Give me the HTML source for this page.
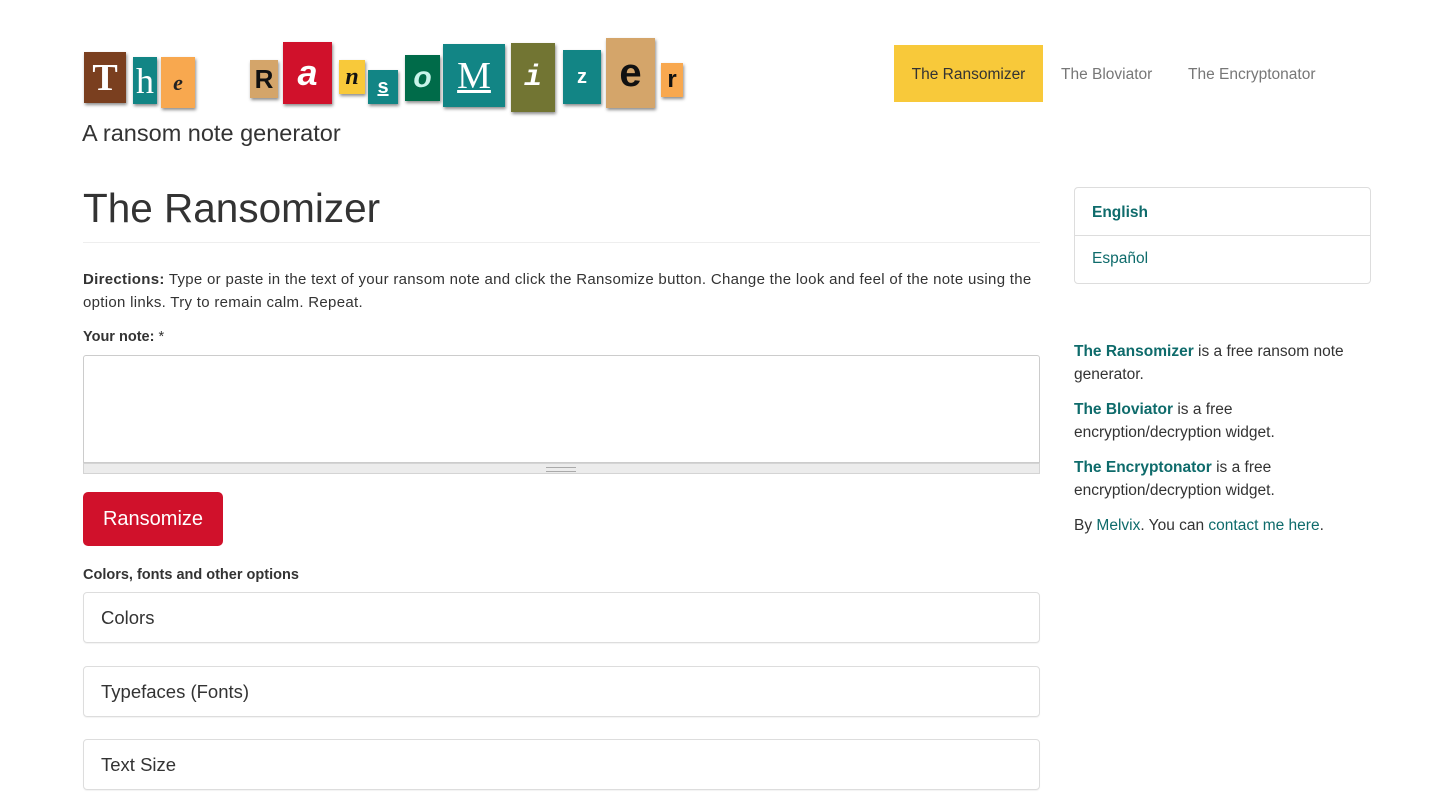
<!DOCTYPE html>
<html><head><meta charset="utf-8"><style>
body{margin:0;background:#fff;font-family:"Liberation Sans",sans-serif;color:#333;width:1444px;height:796px;overflow:hidden;position:relative}
.a{position:absolute}
.t{position:absolute;box-shadow:1px 2px 3px rgba(0,0,0,.45);display:flex;align-items:center;justify-content:center;font-weight:bold}
a{color:#0e6b6b;text-decoration:none}
.nav{position:absolute;top:45px;height:57px;line-height:60px;font-size:15.5px;color:#777}
.panel{position:absolute;left:83px;width:957px;border:1px solid #ddd;border-radius:4px;font-size:18.5px;color:#333;padding-left:17px;box-sizing:border-box;box-shadow:0 1px 1px rgba(0,0,0,.05)}
.sb{font-size:15.5px;line-height:23px;color:#333}
.sb b{color:#0e6b6b}
</style></head><body>
<div class="t" style="left:84px;top:52px;width:42px;height:51px;background:#7a3f1f;color:#fff;font:bold 38px 'Liberation Serif',serif">T</div>
<div class="t" style="left:133px;top:57px;width:24px;height:47px;background:#128585;color:#fff;font:36px 'Liberation Serif',serif">h</div>
<div class="t" style="left:161px;top:57px;width:34px;height:51px;background:#f8a84f;color:#222;font:italic bold 22px 'Liberation Serif',serif">e</div>
<div class="t" style="left:250px;top:60px;width:28px;height:38px;background:#d4a56a;color:#111;font:bold 26px 'Liberation Sans',sans-serif">R</div>
<div class="t" style="left:283px;top:42px;width:49px;height:62px;background:#d0112b;color:#fff;font:italic bold 36px 'Liberation Sans',sans-serif">a</div>
<div class="t" style="left:339px;top:60px;width:26px;height:34px;background:#f8c93a;color:#111;font:italic bold 24px 'Liberation Serif',serif">n</div>
<div class="t" style="left:368px;top:70px;width:30px;height:34px;background:#128585;color:#fff;font:bold 20px 'Liberation Sans',sans-serif;text-decoration:underline">s</div>
<div class="t" style="left:405px;top:55px;width:35px;height:46px;background:#006b49;color:#c8f4ea;font:italic bold 30px 'Liberation Sans',sans-serif">o</div>
<div class="t" style="left:443px;top:44px;width:62px;height:63px;background:#128585;color:#fff;font:38px 'Liberation Serif',serif;text-decoration:underline">M</div>
<div class="t" style="left:511px;top:43px;width:44px;height:69px;background:#727533;color:#fff;font:italic bold 30px 'Liberation Mono',monospace">i</div>
<div class="t" style="left:563px;top:50px;width:38px;height:54px;background:#128585;color:#fff;font:bold 20px 'Liberation Sans',sans-serif">z</div>
<div class="t" style="left:606px;top:38px;width:49px;height:70px;background:#d4a56a;color:#111;font:bold 40px 'Liberation Sans',sans-serif">e</div>
<div class="t" style="left:661px;top:63px;width:22px;height:34px;background:#f8a84f;color:#111;font:bold 24px 'Liberation Sans',sans-serif">r</div>
<div class="a" style="left:82px;top:120px;font-size:23.5px;color:#333">A ransom note generator</div>

<div class="nav" style="left:894px;width:149px;background:#f8c93a;color:#333;text-align:center">The Ransomizer</div>
<div class="nav" style="left:1061px">The Bloviator</div>
<div class="nav" style="left:1188px">The Encryptonator</div>

<div class="a" style="left:83px;top:185px;font-size:40.5px;color:#333">The Ransomizer</div>
<div class="a" style="left:83px;top:242px;width:957px;border-top:1px solid #eee"></div>
<div class="a" style="left:83px;top:268px;width:962px;font-size:15px;line-height:23px;letter-spacing:.3px">
<b>Directions:</b> Type or paste in the text of your ransom note and click the Ransomize button. Change the look and feel of the note using the option links. Try to remain calm. Repeat.</div>
<div class="a" style="left:83px;top:329px;font-size:14.5px;font-weight:bold">Your note: <span style="font-weight:normal">*</span></div>
<div class="a" style="left:83px;top:355px;width:957px;height:108px;border:1px solid #ccc;border-radius:3px 3px 0 0;box-sizing:border-box"></div>
<div class="a" style="left:83px;top:463px;width:957px;height:11px;background:#ececec;border:1px solid #d4d4d4;box-sizing:border-box"></div>
<div class="a" style="left:546px;top:467px;width:30px;height:3px;border-top:1px solid #aaa;border-bottom:1px solid #aaa"></div>
<div class="a" style="left:83px;top:492px;width:140px;height:54px;background:#d0112b;border-radius:5px;color:#fff;font-size:20px;line-height:54px;text-align:center">Ransomize</div>
<div class="a" style="left:83px;top:567px;font-size:14.5px;font-weight:bold">Colors, fonts and other options</div>
<div class="panel" style="top:592px;height:51px;line-height:49px">Colors</div>
<div class="panel" style="top:666px;height:51px;line-height:49px">Typefaces (Fonts)</div>
<div class="panel" style="top:739px;height:51px;line-height:49px">Text Size</div>

<div class="a" style="left:1074px;top:187px;width:297px;height:97px;border:1px solid #ddd;border-radius:4px;box-sizing:border-box;font-size:15.5px">
<div style="height:47px;line-height:49px;padding-left:17px;border-bottom:1px solid #ddd;font-weight:bold;color:#0e6b6b">English</div>
<div style="line-height:46px;padding-left:17px;color:#0e6b6b">Español</div></div>
<div class="a sb" style="left:1074px;top:340px;width:290px">
<div style="margin-bottom:12px"><b>The Ransomizer</b> is a free ransom note generator.</div>
<div style="margin-bottom:12px"><b>The Bloviator</b> is a free<br>encryption/decryption widget.</div>
<div style="margin-bottom:12px"><b>The Encryptonator</b> is a free<br>encryption/decryption widget.</div>
<div>By <a>Melvix</a>. You can <a>contact me here</a>.</div>
</div>
</body></html>
